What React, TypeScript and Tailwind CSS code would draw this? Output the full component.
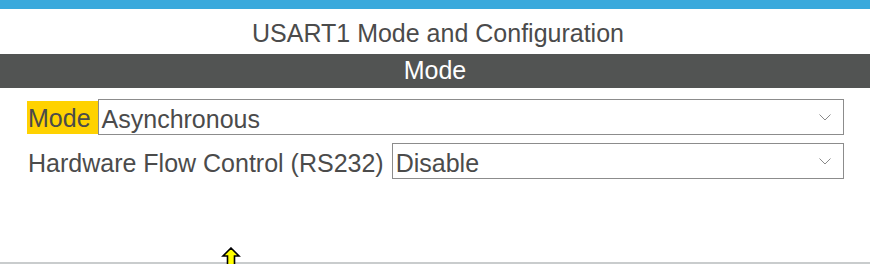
import * as React from "react";

const font = { fontFamily: '"Liberation Sans", Arial, sans-serif' };

function Chevron() {
  return (
    <svg width="12" height="7" viewBox="0 0 12 7" className="shrink-0">
      <path d="M0.5 0.5 L6 6 L11.5 0.5" fill="none" stroke="#8a8a8a" strokeWidth="1" />
    </svg>
  );
}

function Select({ value }: { value: string }) {
  return (
    <div className="flex h-[36px] min-w-0 flex-1 items-center justify-between border border-[#8c8c8c] bg-white pl-[3px] pr-[12px]">
      <span className="pt-[4px] text-[25px] leading-none text-[#4b4b4b]">{value}</span>
      <Chevron />
    </div>
  );
}

export default function App() {
  return (
    <div
      className="relative flex h-[264px] w-[870px] flex-col overflow-hidden bg-white"
      style={font}
    >
      <div className="h-[9px] bg-[#3aa9dc]" />
      <div className="flex h-[45px] items-center justify-center pl-[6px] pt-[4px] text-[25px] text-[#4b4b4b]">
        USART1 Mode and Configuration
      </div>
      <div className="flex h-[34px] items-center justify-center bg-[#525453] text-[25px] text-white">
        Mode
      </div>

      <div className="flex flex-col gap-[8px] pl-[27px] pr-[26px] pt-[11px]">
        <div className="flex items-center">
          <span className="flex h-[33px] items-center bg-[#ffd200] pl-[1px] pr-[7px] pt-[3px] text-[25px] leading-none text-[#4b4b4b]">
            Mode
          </span>
          <Select value="Asynchronous" />
        </div>
        <div className="flex items-center">
          <span className="pl-[1px] pr-[8px] pt-[4px] text-[25px] leading-none text-[#4b4b4b]">
            Hardware Flow Control (RS232)
          </span>
          <Select value="Disable" />
        </div>
      </div>

      <div className="mt-auto h-[2px] bg-[#c9cccd]" />

      {/* mouse cursor */}
      <svg
        width="20"
        height="18"
        viewBox="0 0 20 18"
        className="absolute left-[221px] top-[247px]"
      >
        <path
          d="M10 1 L18 9 L13.5 9 L13.5 18 L6.5 18 L6.5 9 L2 9 Z"
          fill="#ffff00"
          stroke="#000"
          strokeWidth="1.6"
          strokeLinejoin="miter"
        />
      </svg>
    </div>
  );
}
